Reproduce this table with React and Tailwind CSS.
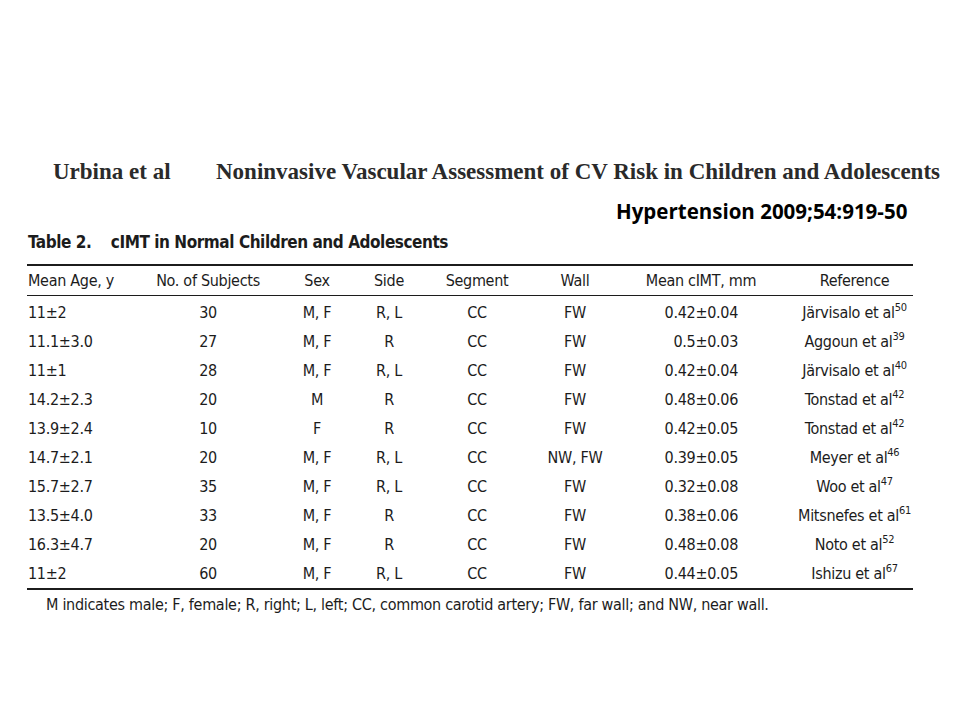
import React from 'react';

const rows = [
  ['11±2', '30', 'M, F', 'R, L', 'CC', 'FW', '0.42±0.04', 'Järvisalo et al', '50'],
  ['11.1±3.0', '27', 'M, F', 'R', 'CC', 'FW', '0.5±0.03', 'Aggoun et al', '39'],
  ['11±1', '28', 'M, F', 'R, L', 'CC', 'FW', '0.42±0.04', 'Järvisalo et al', '40'],
  ['14.2±2.3', '20', 'M', 'R', 'CC', 'FW', '0.48±0.06', 'Tonstad et al', '42'],
  ['13.9±2.4', '10', 'F', 'R', 'CC', 'FW', '0.42±0.05', 'Tonstad et al', '42'],
  ['14.7±2.1', '20', 'M, F', 'R, L', 'CC', 'NW, FW', '0.39±0.05', 'Meyer et al', '46'],
  ['15.7±2.7', '35', 'M, F', 'R, L', 'CC', 'FW', '0.32±0.08', 'Woo et al', '47'],
  ['13.5±4.0', '33', 'M, F', 'R', 'CC', 'FW', '0.38±0.06', 'Mitsnefes et al', '61'],
  ['16.3±4.7', '20', 'M, F', 'R', 'CC', 'FW', '0.48±0.08', 'Noto et al', '52'],
  ['11±2', '60', 'M, F', 'R, L', 'CC', 'FW', '0.44±0.05', 'Ishizu et al', '67'],
];

const narrow = "font-['DejaVu_Sans_Condensed','Liberation_Sans_Narrow',sans-serif] [font-stretch:condensed]";
const cols = 'grid grid-cols-[123px_116px_102px_42px_134px_62px_190px_117px] items-center whitespace-nowrap tracking-[-0.3px]';

const App = () => {
  return (
    <div className="w-[960px] h-[720px] bg-white text-[#1c1c1c] overflow-hidden">
      <div className="pt-[158px] flex font-['Liberation_Serif',serif] font-bold text-[23px] leading-[27px] text-[#2a2a2a] whitespace-nowrap">
        <span className="ml-[53px] w-[163px]">Urbina et al</span>
        <span>Noninvasive Vascular Assessment of CV Risk in Children and Adolescents</span>
      </div>

      <div className="mt-[14px] pl-[616px] font-['Open_Sans',sans-serif] font-bold text-[20.5px] leading-[25px] text-black">
        Hypertension 2009;54:919-50
      </div>

      <div className={`ml-[27px] w-[886px] ${narrow}`}>
        <div className="mt-[6px] pl-px font-bold text-[17px] leading-[24px] tracking-[-0.45px]">
          Table 2.&nbsp;&nbsp;&nbsp; cIMT in Normal Children and Adolescents
        </div>

        <div className="mt-[10px] border-t-2 border-[#1c1c1c]" />
        <div className={`${cols} h-[30px] text-[16px] border-b-[1.5px] border-[#1c1c1c]`}>
          <div className="pl-px">Mean Age, y</div>
          <div className="text-center">No. of Subjects</div>
          <div className="text-center">Sex</div>
          <div className="text-center">Side</div>
          <div className="text-center">Segment</div>
          <div className="text-center">Wall</div>
          <div className="text-center">Mean cIMT, mm</div>
          <div className="text-center">Reference</div>
        </div>

        <div className="border-b-2 border-[#1c1c1c] pt-[2px]">
          {rows.map((r, i) => (
            <div key={i} className={`${cols} h-[29px] text-[16px]`}>
              <div className="pl-px">{r[0]}</div>
              <div className="text-center">{r[1]}</div>
              <div className="text-center">{r[2]}</div>
              <div className="text-center">{r[3]}</div>
              <div className="text-center">{r[4]}</div>
              <div className="text-center">{r[5]}</div>
              <div className="text-right pr-[58px]">{r[6]}</div>
              <div className="text-center">
                {r[7]}
                <sup className="text-[11px] -top-[7px]">{r[8]}</sup>
              </div>
            </div>
          ))}
        </div>

        <div className="pl-[19px] pt-[4px] text-[16px] leading-[22px] tracking-[-0.3px]">
          M indicates male; F, female; R, right; L, left; CC, common carotid artery; FW, far wall; and NW, near wall.
        </div>
      </div>
    </div>
  );
};

export default App;
